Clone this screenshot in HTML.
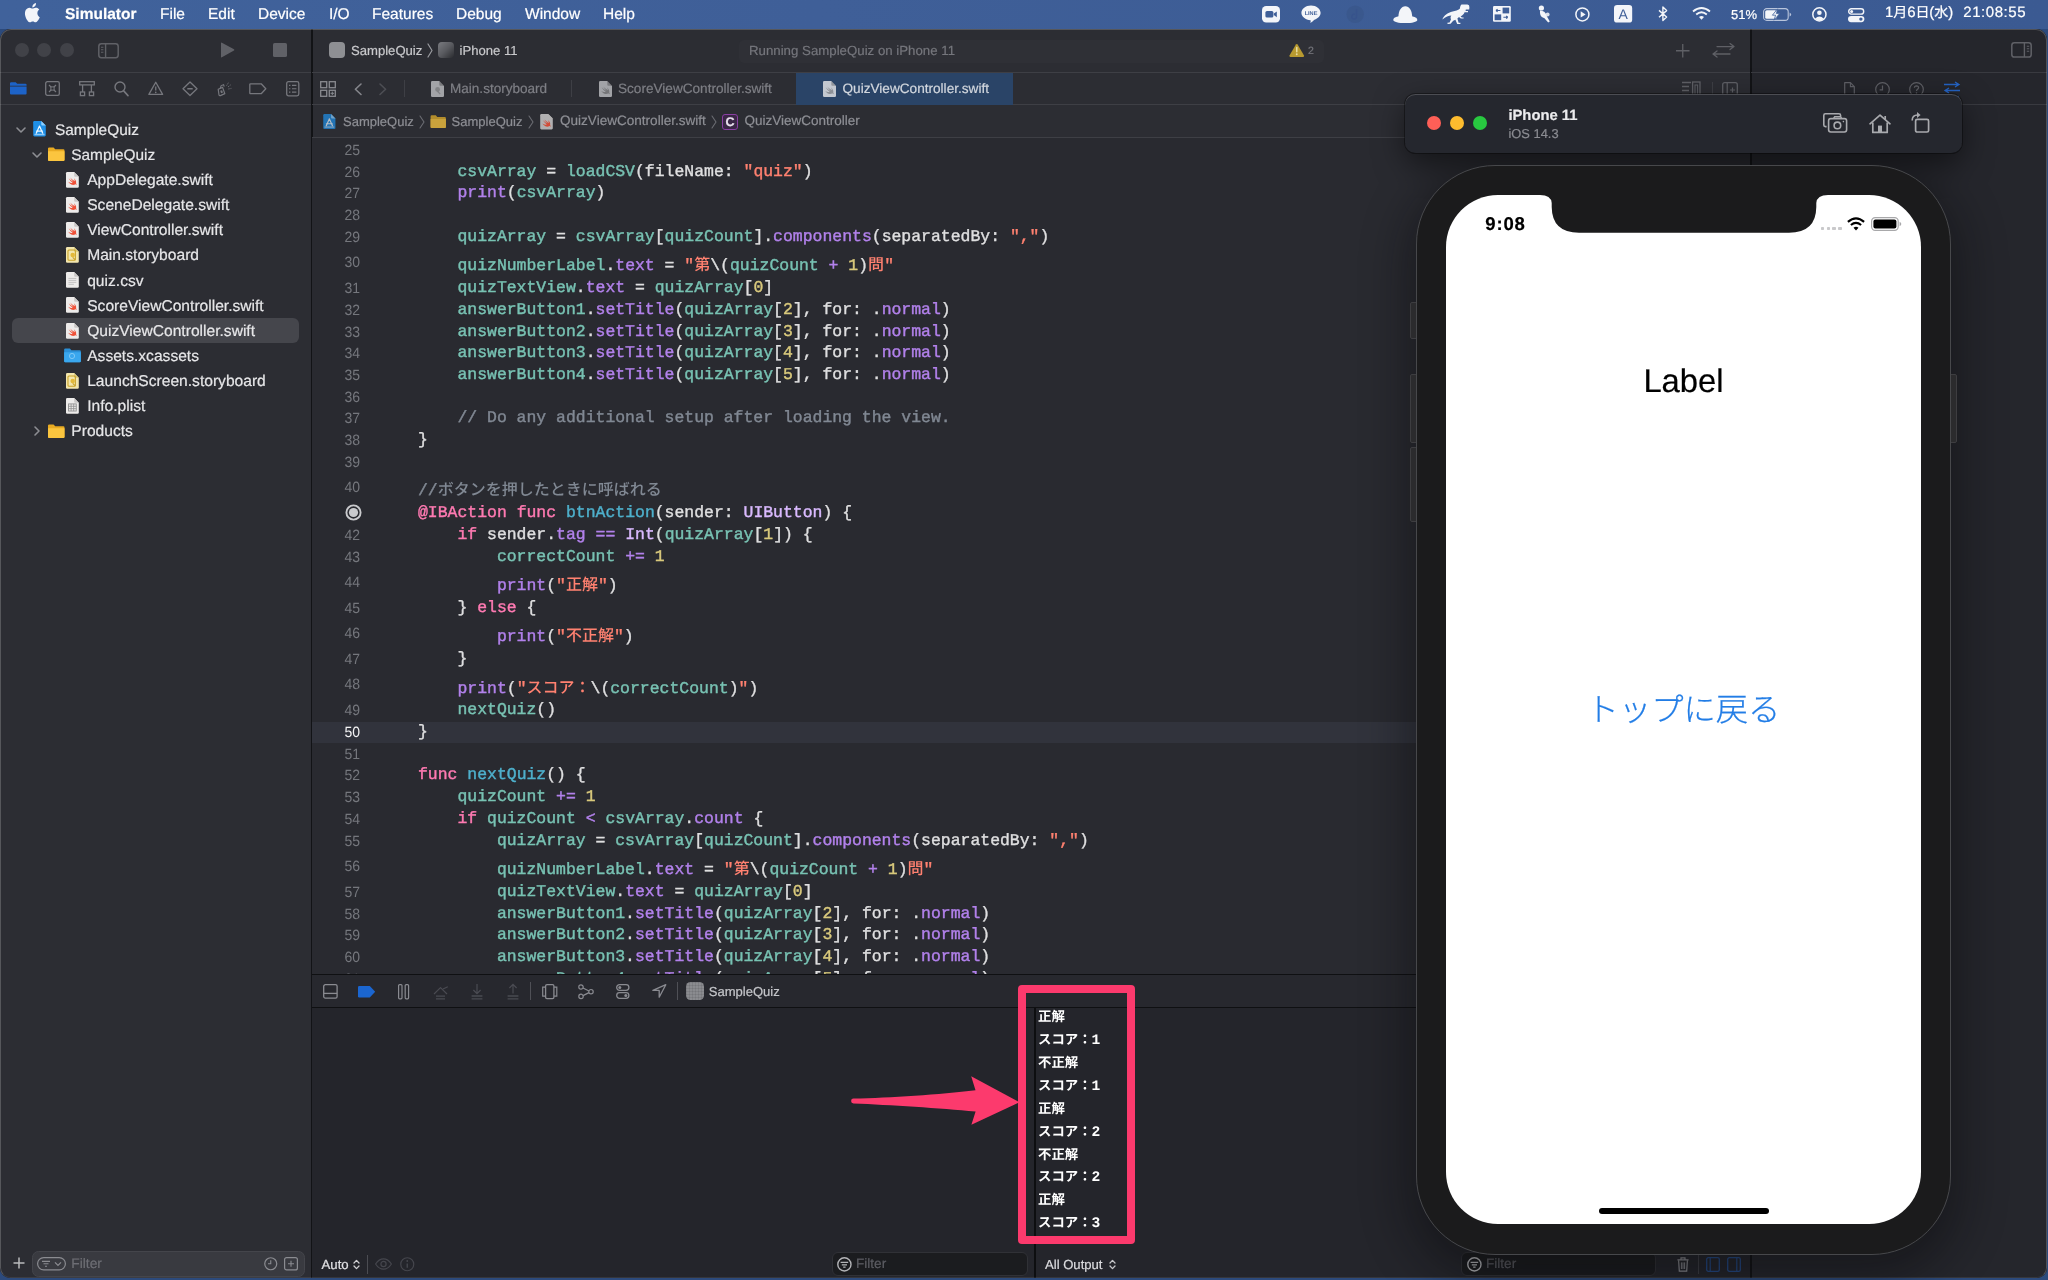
<!DOCTYPE html>
<html lang="ja"><head><meta charset="utf-8"><title>Xcode – SampleQuiz</title>
<style>
*{box-sizing:border-box;margin:0;padding:0}
html,body{width:2048px;height:1280px;overflow:hidden}
body{position:relative;text-rendering:geometricPrecision;background:#2c4a7c;font-family:"Liberation Sans","Noto Sans CJK JP",sans-serif;color:#dfdfe0;-webkit-font-smoothing:antialiased}
.abs{position:absolute}
.t{position:absolute;white-space:pre;line-height:1;-webkit-text-stroke:.2px}
svg{position:absolute;overflow:visible}
#menubar{left:0;top:0;width:2048px;height:29px;background:linear-gradient(90deg,#40629b 0%,#3f5f98 40%,#3b5a92 100%)}
#menubar .t{color:#fff;font-size:15.5px;top:6.5px}
#xwin{will-change:transform;left:0;top:29px;width:2047px;height:1249px;background:#292a30;border-radius:11px 11px 10px 10px;overflow:hidden;}
.hl{position:absolute;background:#1a1b1f}
.mono{font-family:"Liberation Mono","Noto Sans CJK JP",monospace}
.cl{-webkit-text-stroke:.4px;position:absolute;left:378.5px;white-space:pre;font-family:"Liberation Mono","Noto Sans CJK JP",monospace;font-size:16.46px;line-height:22px;height:22px;color:#dfdfe0;letter-spacing:0}
.cl .j{font-family:"Liberation Sans","Noto Sans CJK JP",sans-serif;font-size:16px;letter-spacing:0;line-height:0;font-weight:500;-webkit-text-stroke:0}
.ln{position:absolute;left:6px;width:43px;text-align:right;font-family:"Liberation Sans",sans-serif;font-size:14.9px;line-height:22px;height:22px;color:#75777d;letter-spacing:-0.1px;transform:scaleX(.94);transform-origin:100% 50%}
.k{color:#ff7ab2}.s{color:#ff8170}.n{color:#d9c97c}.p{color:#78c2b3}.d{color:#4eb0cc}.o{color:#b281eb}.y{color:#dabaff}.c{color:#808893}
.row{position:absolute;left:0;white-space:pre;font-size:15.6px;line-height:20px;height:20px;color:#e3e3e5}
.con{position:absolute;left:1038px;white-space:pre;font-family:"Liberation Mono","Noto Sans CJK JP",monospace;font-weight:bold;font-size:13.6px;line-height:20px;height:20px;color:#fff}
.con .j{font-family:"Liberation Sans","Noto Sans CJK JP",sans-serif;font-size:13.4px;font-weight:bold;line-height:0}
</style></head>
<body>
<div id="root" style="position:absolute;left:0;top:0;width:2048px;height:1280px;will-change:transform">
<div id="menubar" class="abs">
<svg preserveAspectRatio="none" style="left:25.0px;top:2.7px;" width="14.8" height="19.2" viewBox="3.9 2 16.2 20"><path d="M18.71 19.5c-.83 1.24-1.71 2.45-3.05 2.47-1.34.03-1.77-.79-3.29-.79-1.53 0-2 .77-3.27.82-1.31.05-2.3-1.32-3.14-2.53C4.25 17 2.94 12.45 4.7 9.39c.87-1.52 2.43-2.48 4.12-2.51 1.28-.02 2.5.87 3.29.87.78 0 2.26-1.07 3.81-.91.65.03 2.47.26 3.64 1.98-.09.06-2.17 1.28-2.15 3.81.03 3.02 2.65 4.03 2.68 4.04-.03.07-.42 1.44-1.38 2.83M13 3.5c.73-.83 1.94-1.46 2.94-1.5.13 1.17-.34 2.35-1.04 3.19-.69.85-1.83 1.51-2.95 1.42-.15-1.15.41-2.35 1.05-3.11z" fill="#f3f5f9"/></svg>
<svg style="left:1261.7px;top:5.5px;" width="18" height="16.6" viewBox="0 0 18 16.6"><rect x="0" y="0" width="18" height="16.6" rx="4.2" fill="#f3f5f9"/><rect x="3.4" y="5" width="8" height="6.6" rx="1.6" fill="#3f5f98"/><path d="M11.8 7.6L14.8 5.4V11.2L11.8 9Z" fill="#3f5f98"/></svg>
<svg style="left:1301.0px;top:4.9px;" width="20" height="18.4" viewBox="0 0 20 18.4"><path d="M10 .4C15.300 .4 19.600 3.700 19.600 7.800C19.600 11 17 13.600 13.400 14.700C12.400 15.800 10.800 17.200 9.300 17.900C9.700 16.900 9.800 15.900 9.600 15.200C4.500 15 .4 11.800 .4 7.800C.4 3.700 4.700 .4 10 .4Z" fill="#f3f5f9"/><text x="10" y="10" font-family="Liberation Sans,sans-serif" font-weight="bold" font-size="5.6" text-anchor="middle" fill="#3f5f98">LINE</text></svg>
<svg style="left:1345.7px;top:4.8px;opacity:.8" width="18.4" height="18.4" viewBox="0 0 18.4 18.4"><circle cx="9.2" cy="9.2" r="8.8" fill="#3a578c"/><path d="M10.5 4.5V11.500A2.400 2.400 0 1 1 8.800 9.400" fill="none" stroke="#36518a" stroke-width="1.4"/></svg>
<svg style="left:1393.0px;top:5.5px;" width="24.6" height="17" viewBox="0 0 24.6 17"><path d="M5.400 11.500C5.400 4.500 8.300 .3 12.300 .3C16.300 .3 19.200 4.500 19.200 11.500Z" fill="#f3f5f9"/><path d="M.3 13.900C.3 11.800 3.400 10.600 5.800 10.300H18.800C21.200 10.600 24.300 11.800 24.300 13.900C24.300 15.900 19 17 12.300 17C5.600 17 .3 15.900 .3 13.900Z" fill="#f3f5f9"/></svg>
<svg style="left:1442.0px;top:3.5px;" width="28" height="20" viewBox="0 0 28 20"><path d="M19.500 .6H25.400Q27.600 .8 27.400 3.200L27.200 5.400H23.800L23.600 7H26V8.200H22.600C21.800 10.400 20.200 11.600 18.600 12.200L19.800 13.400H21.600V14.600H18.800L17 13L15.400 14.400L16.600 18.800H18.400V20H15.200L13.400 15.800L11.200 16.800L8.600 19.800L5.600 20L5.400 18.800L7.600 18.400L9 15.200C8.200 13.800 8.600 12.400 9.400 11.400C6.800 11.600 3.600 12.800 .4 15.400C1.800 12 5.600 8.600 10.600 7.600C13.400 7 16 6.600 17.800 4.800C18.200 3 18.400 1.400 19.500 .6Z" fill="#f3f5f9"/></svg>
<svg style="left:1493.0px;top:5.9px;" width="17.8" height="15.8" viewBox="0 0 17.8 15.8"><rect x="0" y="0" width="17.800" height="15.800" rx="1.200" fill="#f3f5f9"/><rect x="1.600" y="8.400" width="6.600" height="5.800" fill="#3f5f98"/><rect x="9.600" y="1.600" width="6.600" height="5.800" fill="#3f5f98"/><path d="M3 4.500H7.400M3 4.500L4.600 3.200M3 4.500L4.600 5.800" stroke="#3f5f98" stroke-width="1.100" fill="none"/><path d="M10.400 11.300H14.800M14.800 11.300L13.200 10M14.800 11.300L13.200 12.600" stroke="#3f5f98" stroke-width="1.100" fill="none"/></svg>
<svg style="left:1536.5px;top:5.0px;" width="14" height="18" viewBox="0 0 14 18"><circle cx="4.400" cy="3" r="2.600" fill="#f3f5f9"/><path d="M3 5.600C6.400 5.800 8.800 7.400 9.400 10.400L12.800 16.400L11.200 17.600L7.200 13C4.600 12.800 2.600 10.600 3 5.600Z" fill="#f3f5f9"/><circle cx="10.600" cy="9.600" r="2" fill="#f3f5f9" opacity=".85"/></svg>
<svg style="left:1575.0px;top:7.3px;" width="14.8" height="14.8" viewBox="0 0 14.8 14.8"><circle cx="7.400" cy="7.400" r="6.500" fill="none" stroke="#f3f5f9" stroke-width="1.500"/><path d="M5.700 4.300L10.600 7.400L5.700 10.500Z" fill="#f3f5f9"/></svg>
<svg style="left:1613.7px;top:4.9px;" width="18.2" height="17.6" viewBox="0 0 18.2 17.6"><rect x="0" y="0" width="18.200" height="17.600" rx="3.200" fill="#f3f5f9"/><text x="9.100" y="13.900" font-family="Liberation Sans,sans-serif" font-size="14" text-anchor="middle" fill="#3f5f98">A</text></svg>
<svg style="left:1657.5px;top:5.8px;" width="10" height="15.6" viewBox="0 0 10 15.6"><path d="M1 4.400L8.600 11L4.900 14.600V1L8.600 4.600L1 11.200" fill="none" stroke="#f3f5f9" stroke-width="1.400" stroke-linejoin="round"/></svg>
<svg style="left:1692.0px;top:7.3px;" width="19" height="13" viewBox="0 0 19 13"><path d="M9.500 12.800L7 10.100Q9.500 8.100 12 10.100Z" fill="#f3f5f9"/><path d="M4.200 7.500Q9.500 3 14.800 7.500" fill="none" stroke="#f3f5f9" stroke-width="1.900"/><path d="M1 4.400Q9.500 -2.600 18 4.400" fill="none" stroke="#f3f5f9" stroke-width="1.900"/></svg>
<svg style="left:1762.5px;top:7.5px;" width="28.5" height="13" viewBox="0 0 28.5 13"><rect x=".6" y=".6" width="24.600" height="11.800" rx="3.200" fill="none" stroke="#b9c5dc" stroke-width="1.100"/><rect x="2.200" y="2.200" width="11.400" height="8.600" rx="1.600" fill="#f3f5f9"/><path d="M26.600 4.400Q28.100 5.100 28.100 6.500Q28.100 7.900 26.600 8.600Z" fill="#b9c5dc"/><path d="M14.600 .8L9.400 7.200H12.600L11 12.200L16.600 5.600H13.300Z" fill="#f3f5f9" stroke="#3f5f98" stroke-width=".8"/></svg>
<svg style="left:1812.3px;top:7.0px;" width="14.8" height="14.8" viewBox="0 0 14.8 14.8"><circle cx="7.400" cy="7.400" r="6.600" fill="none" stroke="#f3f5f9" stroke-width="1.500"/><circle cx="7.400" cy="5.800" r="2.300" fill="#f3f5f9"/><path d="M3 11.800Q7.400 7.400 11.800 11.800Q7.400 15.600 3 11.800Z" fill="#f3f5f9"/></svg>
<svg style="left:1847.8px;top:7.5px;" width="16.4" height="14.2" viewBox="0 0 16.4 14.2"><rect x=".7" y=".7" width="15" height="5.400" rx="2.700" fill="none" stroke="#f3f5f9" stroke-width="1.400"/><circle cx="3.600" cy="3.400" r="1.500" fill="#f3f5f9"/><rect x="0" y="8" width="16.400" height="6.200" rx="3.100" fill="#f3f5f9"/><circle cx="12.900" cy="11.100" r="1.700" fill="#3f5f98"/></svg>
<div class="t" style="left:65px;font-weight:bold;">Simulator</div>
<div class="t" style="left:160px;">File</div>
<div class="t" style="left:208px;">Edit</div>
<div class="t" style="left:258px;">Device</div>
<div class="t" style="left:329px;">I/O</div>
<div class="t" style="left:372px;">Features</div>
<div class="t" style="left:456px;">Debug</div>
<div class="t" style="left:525px;">Window</div>
<div class="t" style="left:603px;">Help</div>
<div class="t" style="left:1731px;font-size:13px;top:8px">51%</div>
<div class="t" style="left:1885px;font-size:15px;top:5.3px;letter-spacing:-.1px">1<span style="font-size:14px">月</span>6<span style="font-size:14px">日</span>(<span style="font-size:14px">水</span>)</div>
<div class="t" style="left:1963.3px;font-size:15px;top:5.3px;letter-spacing:.55px">21:08:55</div>
</div>
<div id="xwin" class="abs">
<div class="abs" style="left:0;top:0;width:311px;height:1249px;background:#2c2d33"></div>
<div class="abs" style="left:312px;top:0;width:1438px;height:109px;background:#2c2d33"></div>
<div class="abs" style="left:1751px;top:0;width:296px;height:1249px;background:#25262c"></div>
<div class="hl" style="left:311px;top:0;width:1.5px;height:1249px;background:#121316"></div>
<div class="hl" style="left:1750px;top:0;width:1.5px;height:1249px;background:#121316"></div>
<div class="hl" style="left:0;top:43px;width:311px;height:1px;background:#3e3f45"></div>
<div class="hl" style="left:0;top:75px;width:311px;height:1px;background:#3e3f45"></div>
<div class="hl" style="left:312px;top:43px;width:1438px;height:1px;background:#3e3f45"></div>
<div class="hl" style="left:312px;top:75px;width:1438px;height:1px;background:#3e3f45"></div>
<div class="hl" style="left:312px;top:108px;width:1438px;height:1px;background:#3e3f45"></div>
<div class="hl" style="left:1751px;top:43px;width:296px;height:1px;background:#393a40"></div>
<div class="hl" style="left:1751px;top:75px;width:296px;height:1px;background:#393a40"></div>
<div class="abs" style="left:14.5px;top:14.0px;width:14px;height:14px;border-radius:7px;background:#414248"></div>
<div class="abs" style="left:37.4px;top:14.0px;width:14px;height:14px;border-radius:7px;background:#414248"></div>
<div class="abs" style="left:60.2px;top:14.0px;width:14px;height:14px;border-radius:7px;background:#414248"></div>
<svg style="left:98.0px;top:13.5px" width="21" height="15.5" viewBox="0 0 21 15.5" ><rect x=".8" y=".8" width="19.4" height="13.9" rx="2.6" fill="none" stroke="#606167" stroke-width="1.5"/><path d="M7.6 1V14.5" stroke="#606167" stroke-width="1.4"/><path d="M3 4.3H5.4M3 6.8H5.4M3 9.3H5.4" stroke="#606167" stroke-width="1.1"/></svg>
<svg style="left:219.5px;top:13.0px" width="15" height="16" viewBox="0 0 15 16" ><path d="M1 1.2Q1 .2 1.9 .7L14 7.3Q14.8 8 14 8.6L1.9 15.3Q1 15.8 1 14.8Z" fill="#606167"/></svg>
<svg style="left:273.0px;top:14.2px" width="14" height="14" viewBox="0 0 14 14" ><rect x="0" y="0" width="14" height="14" rx="1.6" fill="#606167"/></svg>
<svg style="left:10.2px;top:53.4px" width="16.6" height="12.8" viewBox="0 0 16.8 14" preserveAspectRatio="none"><path d="M0 1.4Q0 .2 1.2 .2H5.8L7.3 1.9H15.6Q16.8 1.9 16.8 3.1V4H0Z" fill="#1d63c8"/><path d="M0 5H16.8V12.6Q16.8 13.8 15.6 13.8H1.2Q0 13.8 0 12.6Z" fill="#1d63c8"/></svg>
<svg style="left:45.0px;top:52.2px" width="15" height="15" viewBox="0 0 15 15" ><rect x=".7" y=".7" width="13.6" height="13.6" rx="1.6" fill="none" stroke="#76777d" stroke-width="1.3"/><path d="M4 4L11 11M11 4L4 11" stroke="#76777d" stroke-width="1.2"/><rect x="5.9" y="5.9" width="3.2" height="3.2" fill="#2b2c31" stroke="#76777d" stroke-width="1"/></svg>
<svg style="left:79.0px;top:52.2px" width="16" height="15.5" viewBox="0 0 16 15.5" ><rect x=".7" y=".7" width="14.6" height="3.2" fill="none" stroke="#76777d" stroke-width="1.3"/><path d="M3.6 4V11M12.4 4V11" stroke="#76777d" stroke-width="1.3"/><rect x="1.4" y="11" width="4.2" height="3.6" fill="none" stroke="#76777d" stroke-width="1.3"/><rect x="10.4" y="11" width="4.2" height="3.6" fill="none" stroke="#76777d" stroke-width="1.3"/></svg>
<svg style="left:113.5px;top:52.0px" width="15" height="16" viewBox="0 0 15 16" ><circle cx="6" cy="6" r="5" fill="none" stroke="#76777d" stroke-width="1.4"/><path d="M9.7 9.9L14 14.6" stroke="#76777d" stroke-width="1.6" stroke-linecap="round"/></svg>
<svg style="left:148.0px;top:52.2px" width="15.5" height="14.5" viewBox="0 0 15.5 14.5" ><path d="M7.75 1.2L14.6 13.4H.9Z" fill="none" stroke="#76777d" stroke-width="1.3" stroke-linejoin="round"/><path d="M7.75 5.4V9.4" stroke="#76777d" stroke-width="1.3"/><circle cx="7.75" cy="11.4" r=".8" fill="#76777d"/></svg>
<svg style="left:182.0px;top:52.0px" width="16" height="15.5" viewBox="0 0 16 15.5" ><path d="M8 1L15 7.75L8 14.5L1 7.75Z" fill="none" stroke="#76777d" stroke-width="1.3" stroke-linejoin="round"/><path d="M5.3 7.75H10.7" stroke="#76777d" stroke-width="1.3"/></svg>
<svg style="left:215.5px;top:51.5px" width="18" height="16" viewBox="0 0 18 16" ><path d="M2.2 8.2L6.6 6.4L8.8 12.6L4.4 14.6Q3.4 15 3 14Z" fill="none" stroke="#76777d" stroke-width="1.2" stroke-linejoin="round"/><path d="M4.2 7.2L5.2 4.6L7.6 3.8L8.2 5.6" fill="none" stroke="#76777d" stroke-width="1.1"/><rect x="4.6" y="9.4" width="2" height="2.6" fill="#76777d" transform="rotate(-20 5.6 10.7)"/><path d="M10.6 4.6L12.6 1.4M12 6L15 3.6M12.4 8L15.4 7.4" stroke="#76777d" stroke-width=".9" stroke-dasharray="1.2 1"/></svg>
<svg style="left:249.0px;top:54.0px" width="18" height="11.5" viewBox="0 0 18 11.5" ><path d="M1.6 .8H12.2L16.8 5.75L12.2 10.7H1.6Q.8 10.7 .8 9.9V1.6Q.8 .8 1.6 .8Z" fill="none" stroke="#76777d" stroke-width="1.3" stroke-linejoin="round"/></svg>
<svg style="left:286.0px;top:52.0px" width="13.5" height="15.5" viewBox="0 0 13.5 15.5" ><rect x=".7" y=".7" width="12.1" height="14.1" rx="1.8" fill="none" stroke="#76777d" stroke-width="1.3"/><path d="M6 4.4H10.4M6 7.75H10.4M6 11.1H10.4" stroke="#76777d" stroke-width="1.2"/><path d="M3 4.4H4.4M3 7.75H4.4M3 11.1H4.4" stroke="#76777d" stroke-width="1.2"/></svg>
<div class="abs" style="left:12px;top:288.5px;width:287px;height:25px;border-radius:6px;background:#45464c"></div>
<svg style="left:15.8px;top:97.5px" width="10" height="6" viewBox="0 0 10 6" ><path d="M1 1L5 5L9 1" fill="none" stroke="#8d8e93" stroke-width="1.6" stroke-linecap="round" stroke-linejoin="round"/></svg>
<svg style="left:33.4px;top:92.0px" width="13" height="15.5" viewBox="0 0 13 16"><path d="M1.2 0H8.3L13 4.7V14.8Q13 16 11.8 16H1.2Q0 16 0 14.8V1.2Q0 0 1.2 0Z" fill="#1f8fe6"/><path d="M8.3 0L13 4.7H9.3Q8.3 4.7 8.3 3.7Z" fill="#8fd0ff"/><path d="M6.5 5.2L3.2 12.6M6.5 5.2L9.8 12.6M3.4 10.4H9.6" stroke="#eaf6ff" stroke-width="1.3" fill="none" stroke-linecap="round"/><rect x="1.3" y="13.2" width="10.4" height="1.5" fill="#bfe3ff" opacity=".7"/></svg>
<div class="t" style="left:55.0px;top:91.6px;font-size:15.40px;line-height:20px;height:20px;color:#e6e6e8;">SampleQuiz</div>
<svg style="left:31.6px;top:122.7px" width="10" height="6" viewBox="0 0 10 6" ><path d="M1 1L5 5L9 1" fill="none" stroke="#8d8e93" stroke-width="1.6" stroke-linecap="round" stroke-linejoin="round"/></svg>
<svg style="left:48.0px;top:118.3px" width="16.5" height="14" viewBox="0 0 16.5 14"><path d="M0 1.6Q0 .4 1.2 .4H5.6L7.2 2.2H15.3Q16.5 2.2 16.5 3.4V12.8Q16.5 14 15.3 14H1.2Q0 14 0 12.8Z" fill="#e9ab22"/><path d="M0 4.2H16.5V12.8Q16.5 14 15.3 14H1.2Q0 14 0 12.8Z" fill="#fbc53f"/></svg>
<div class="t" style="left:71.3px;top:116.8px;font-size:15.40px;line-height:20px;height:20px;color:#e6e6e8;">SampleQuiz</div>
<svg style="left:65.6px;top:142.6px;opacity:1" width="12.8" height="15.8" viewBox="0 0 13 16"><path d="M1.2 0H8.3L13 4.7V14.8Q13 16 11.8 16H1.2Q0 16 0 14.8V1.2Q0 0 1.2 0Z" fill="#edebea"/><path d="M8.3 0L13 4.7H9.3Q8.3 4.7 8.3 3.7Z" fill="#c9c7c6"/><path d="M2.6 6.2C4.6 8 6.2 9.1 7.6 9.9C6.3 8.6 5 7 4.2 5.6C5.9 7.2 7.7 8.6 9 9.3C8.9 8.3 8.6 7.4 8 6.4C9.8 7.8 10.8 9.8 10.2 11.4C10.8 12.1 10.9 12.8 10.8 13.3C10.3 12.5 9.7 12.4 9.2 12.6C8.1 13.2 6.7 13.2 5.4 12.7C4 12.1 3 11.1 2.2 9.9C3.6 10.9 5.3 11.4 6.7 10.8C5 9.5 3.6 7.8 2.6 6.2Z" fill="#f05138"/></svg>
<div class="t" style="left:87.2px;top:141.8px;font-size:15.60px;line-height:20px;height:20px;color:#e6e6e8;">AppDelegate.swift</div>
<svg style="left:65.6px;top:167.7px;opacity:1" width="12.8" height="15.8" viewBox="0 0 13 16"><path d="M1.2 0H8.3L13 4.7V14.8Q13 16 11.8 16H1.2Q0 16 0 14.8V1.2Q0 0 1.2 0Z" fill="#edebea"/><path d="M8.3 0L13 4.7H9.3Q8.3 4.7 8.3 3.7Z" fill="#c9c7c6"/><path d="M2.6 6.2C4.6 8 6.2 9.1 7.6 9.9C6.3 8.6 5 7 4.2 5.6C5.9 7.2 7.7 8.6 9 9.3C8.9 8.3 8.6 7.4 8 6.4C9.8 7.8 10.8 9.8 10.2 11.4C10.8 12.1 10.9 12.8 10.8 13.3C10.3 12.5 9.7 12.4 9.2 12.6C8.1 13.2 6.7 13.2 5.4 12.7C4 12.1 3 11.1 2.2 9.9C3.6 10.9 5.3 11.4 6.7 10.8C5 9.5 3.6 7.8 2.6 6.2Z" fill="#f05138"/></svg>
<div class="t" style="left:87.2px;top:166.9px;font-size:15.60px;line-height:20px;height:20px;color:#e6e6e8;">SceneDelegate.swift</div>
<svg style="left:65.6px;top:192.9px;opacity:1" width="12.8" height="15.8" viewBox="0 0 13 16"><path d="M1.2 0H8.3L13 4.7V14.8Q13 16 11.8 16H1.2Q0 16 0 14.8V1.2Q0 0 1.2 0Z" fill="#edebea"/><path d="M8.3 0L13 4.7H9.3Q8.3 4.7 8.3 3.7Z" fill="#c9c7c6"/><path d="M2.6 6.2C4.6 8 6.2 9.1 7.6 9.9C6.3 8.6 5 7 4.2 5.6C5.9 7.2 7.7 8.6 9 9.3C8.9 8.3 8.6 7.4 8 6.4C9.8 7.8 10.8 9.8 10.2 11.4C10.8 12.1 10.9 12.8 10.8 13.3C10.3 12.5 9.7 12.4 9.2 12.6C8.1 13.2 6.7 13.2 5.4 12.7C4 12.1 3 11.1 2.2 9.9C3.6 10.9 5.3 11.4 6.7 10.8C5 9.5 3.6 7.8 2.6 6.2Z" fill="#f05138"/></svg>
<div class="t" style="left:87.2px;top:192.1px;font-size:15.60px;line-height:20px;height:20px;color:#e6e6e8;">ViewController.swift</div>
<svg style="left:65.6px;top:218.1px;opacity:1" width="12.8" height="15.8" viewBox="0 0 13 16"><path d="M1.2 0H8.3L13 4.7V14.8Q13 16 11.8 16H1.2Q0 16 0 14.8V1.2Q0 0 1.2 0Z" fill="#f3e6ae"/><path d="M8.3 0L13 4.7H9.3Q8.3 4.7 8.3 3.7Z" fill="#d9c77a"/><rect x="2" y="3" width="7.5" height="10.5" rx="1" fill="none" stroke="#c9a227" stroke-width="1.1"/><circle cx="6.8" cy="8.2" r="2.3" fill="#e3b93a"/><path d="M6.8 10.5L9.5 13" stroke="#c9a227" stroke-width="1.2"/></svg>
<div class="t" style="left:87.2px;top:217.3px;font-size:15.60px;line-height:20px;height:20px;color:#e6e6e8;">Main.storyboard</div>
<svg style="left:65.6px;top:243.3px;opacity:1" width="12.8" height="15.8" viewBox="0 0 13 16"><path d="M1.2 0H8.3L13 4.7V14.8Q13 16 11.8 16H1.2Q0 16 0 14.8V1.2Q0 0 1.2 0Z" fill="#edebea"/><path d="M8.3 0L13 4.7H9.3Q8.3 4.7 8.3 3.7Z" fill="#c9c7c6"/><path d="M2.5 6.5H10.5M2.5 8.5H10.5M2.5 10.5H10.5M2.5 12.5H8" stroke="#bdbcbc" stroke-width="0.9"/></svg>
<div class="t" style="left:87.2px;top:242.5px;font-size:15.60px;line-height:20px;height:20px;color:#e6e6e8;">quiz.csv</div>
<svg style="left:65.6px;top:268.4px;opacity:1" width="12.8" height="15.8" viewBox="0 0 13 16"><path d="M1.2 0H8.3L13 4.7V14.8Q13 16 11.8 16H1.2Q0 16 0 14.8V1.2Q0 0 1.2 0Z" fill="#edebea"/><path d="M8.3 0L13 4.7H9.3Q8.3 4.7 8.3 3.7Z" fill="#c9c7c6"/><path d="M2.6 6.2C4.6 8 6.2 9.1 7.6 9.9C6.3 8.6 5 7 4.2 5.6C5.9 7.2 7.7 8.6 9 9.3C8.9 8.3 8.6 7.4 8 6.4C9.8 7.8 10.8 9.8 10.2 11.4C10.8 12.1 10.9 12.8 10.8 13.3C10.3 12.5 9.7 12.4 9.2 12.6C8.1 13.2 6.7 13.2 5.4 12.7C4 12.1 3 11.1 2.2 9.9C3.6 10.9 5.3 11.4 6.7 10.8C5 9.5 3.6 7.8 2.6 6.2Z" fill="#f05138"/></svg>
<div class="t" style="left:87.2px;top:267.6px;font-size:15.60px;line-height:20px;height:20px;color:#e6e6e8;">ScoreViewController.swift</div>
<svg style="left:65.6px;top:293.5px;opacity:1" width="12.8" height="15.8" viewBox="0 0 13 16"><path d="M1.2 0H8.3L13 4.7V14.8Q13 16 11.8 16H1.2Q0 16 0 14.8V1.2Q0 0 1.2 0Z" fill="#edebea"/><path d="M8.3 0L13 4.7H9.3Q8.3 4.7 8.3 3.7Z" fill="#c9c7c6"/><path d="M2.6 6.2C4.6 8 6.2 9.1 7.6 9.9C6.3 8.6 5 7 4.2 5.6C5.9 7.2 7.7 8.6 9 9.3C8.9 8.3 8.6 7.4 8 6.4C9.8 7.8 10.8 9.8 10.2 11.4C10.8 12.1 10.9 12.8 10.8 13.3C10.3 12.5 9.7 12.4 9.2 12.6C8.1 13.2 6.7 13.2 5.4 12.7C4 12.1 3 11.1 2.2 9.9C3.6 10.9 5.3 11.4 6.7 10.8C5 9.5 3.6 7.8 2.6 6.2Z" fill="#f05138"/></svg>
<div class="t" style="left:87.2px;top:292.7px;font-size:15.60px;line-height:20px;height:20px;color:#e6e6e8;">QuizViewController.swift</div>
<svg style="left:63.5px;top:319.4px" width="17" height="14.2" viewBox="0 0 16.5 14"><path d="M0 1.6Q0 .4 1.2 .4H5.6L7.2 2.2H15.3Q16.5 2.2 16.5 3.4V12.8Q16.5 14 15.3 14H1.2Q0 14 0 12.8Z" fill="#2b8fd6"/><path d="M0 4.2H16.5V12.8Q16.5 14 15.3 14H1.2Q0 14 0 12.8Z" fill="#3aa7ee"/></svg>
<svg style="left:68.0px;top:323.2px" width="8" height="8" viewBox="0 0 8 8" ><circle cx="4" cy="4" r="2.6" fill="none" stroke="#7fc8f5" stroke-width="1"/></svg>
<div class="t" style="left:87.2px;top:317.9px;font-size:15.60px;line-height:20px;height:20px;color:#e6e6e8;">Assets.xcassets</div>
<svg style="left:65.6px;top:343.8px;opacity:1" width="12.8" height="15.8" viewBox="0 0 13 16"><path d="M1.2 0H8.3L13 4.7V14.8Q13 16 11.8 16H1.2Q0 16 0 14.8V1.2Q0 0 1.2 0Z" fill="#f3e6ae"/><path d="M8.3 0L13 4.7H9.3Q8.3 4.7 8.3 3.7Z" fill="#d9c77a"/><rect x="2" y="3" width="7.5" height="10.5" rx="1" fill="none" stroke="#c9a227" stroke-width="1.1"/><circle cx="6.8" cy="8.2" r="2.3" fill="#e3b93a"/><path d="M6.8 10.5L9.5 13" stroke="#c9a227" stroke-width="1.2"/></svg>
<div class="t" style="left:87.2px;top:343.0px;font-size:15.60px;line-height:20px;height:20px;color:#e6e6e8;">LaunchScreen.storyboard</div>
<svg style="left:65.6px;top:369.0px;opacity:1" width="12.8" height="15.8" viewBox="0 0 13 16"><path d="M1.2 0H8.3L13 4.7V14.8Q13 16 11.8 16H1.2Q0 16 0 14.8V1.2Q0 0 1.2 0Z" fill="#edebea"/><path d="M8.3 0L13 4.7H9.3Q8.3 4.7 8.3 3.7Z" fill="#c9c7c6"/><rect x="2.6" y="6" width="7.8" height="7.2" fill="none" stroke="#8d8d8d" stroke-width="0.9"/><path d="M2.6 8.4H10.4M2.6 10.8H10.4M5.2 6V13.2M7.8 6V13.2" stroke="#8d8d8d" stroke-width="0.8"/></svg>
<div class="t" style="left:87.2px;top:368.2px;font-size:15.60px;line-height:20px;height:20px;color:#e6e6e8;">Info.plist</div>
<svg style="left:34.2px;top:397.0px" width="6" height="10" viewBox="0 0 6 10" ><path d="M1 1L5 5L1 9" fill="none" stroke="#8d8e93" stroke-width="1.6" stroke-linecap="round" stroke-linejoin="round"/></svg>
<svg style="left:48.0px;top:395.0px" width="16.5" height="14" viewBox="0 0 16.5 14"><path d="M0 1.6Q0 .4 1.2 .4H5.6L7.2 2.2H15.3Q16.5 2.2 16.5 3.4V12.8Q16.5 14 15.3 14H1.2Q0 14 0 12.8Z" fill="#e9ab22"/><path d="M0 4.2H16.5V12.8Q16.5 14 15.3 14H1.2Q0 14 0 12.8Z" fill="#fbc53f"/></svg>
<div class="t" style="left:71.3px;top:393.3px;font-size:15.60px;line-height:20px;height:20px;color:#e6e6e8;">Products</div>
<svg style="left:13.0px;top:1228.0px" width="12" height="12" viewBox="0 0 12 12" ><path d="M6 .5V11.5M.5 6H11.5" stroke="#b9babd" stroke-width="1.5"/></svg>
<div class="abs" style="left:32.2px;top:1222.3px;width:272.5px;height:25.7px;border-radius:6.5px;background:#393a40;border:1px solid #44454b"></div>
<svg style="left:37.0px;top:1228.0px" width="29" height="13.5" viewBox="0 0 29 13.5" ><rect x=".6" y=".6" width="27.8" height="12.3" rx="6.1" fill="none" stroke="#8b8c91" stroke-width="1.2"/><path d="M5 4.4H13M6.5 6.8H11.5M8 9.2H10" stroke="#8b8c91" stroke-width="1.1"/><path d="M18 5.4L21 8.4L24 5.4" fill="none" stroke="#8b8c91" stroke-width="1.3"/></svg>
<div class="t" style="left:71.3px;top:1226.3px;font-size:13.80px;line-height:18px;height:18px;color:#6d6e74;">Filter</div>
<svg style="left:264.0px;top:1228.0px" width="13.5" height="13.5" viewBox="0 0 13.5 13.5" ><circle cx="6.75" cy="6.75" r="6" fill="none" stroke="#8b8c91" stroke-width="1.2"/><path d="M6.75 3.2V6.75H4" fill="none" stroke="#8b8c91" stroke-width="1.1"/></svg>
<svg style="left:284.0px;top:1228.0px" width="14" height="13.5" viewBox="0 0 14 13.5" ><rect x=".6" y=".6" width="12.8" height="12.3" rx="2" fill="none" stroke="#8b8c91" stroke-width="1.2"/><path d="M4 6.75H10M7 3.75V9.75" stroke="#8b8c91" stroke-width="1.1"/></svg>
<div class="abs" style="left:329px;top:13.0px;width:16px;height:16px;border-radius:4px;background:#8e8f93"></div>
<div class="t" style="left:351.0px;top:12.5px;font-size:13.10px;line-height:17px;height:17px;color:#c9c9cc;">SampleQuiz</div>
<svg style="left:426.5px;top:13.5px" width="6" height="15" viewBox="0 0 6 15" ><path d="M1 1L5 7.5L1 14" fill="none" stroke="#9a9ba0" stroke-width="1.2" stroke-linecap="round" stroke-linejoin="round"/></svg>
<div class="abs" style="left:438px;top:13.0px;width:16px;height:16px;border-radius:4px;background:linear-gradient(135deg,#7a7b80 0%,#5a5b60 50%,#2a2b2f 100%)"></div>
<div class="t" style="left:459.5px;top:12.5px;font-size:13.10px;line-height:17px;height:17px;color:#c9c9cc;">iPhone 11</div>
<div class="abs" style="left:739px;top:10.5px;width:585px;height:23px;border-radius:5px;background:#2f3036"></div>
<div class="t" style="left:749.0px;top:13.3px;font-size:13.25px;line-height:17px;height:17px;color:#75767c;">Running SampleQuiz on iPhone 11</div>
<svg style="left:1289.0px;top:13.7px" width="15.5" height="14.5" viewBox="0 0 15.5 14.5" ><path d="M7.75 .9Q8.3 .9 8.6 1.4L15 12.6Q15.4 13.8 14.2 13.9H1.3Q.1 13.8 .5 12.6L6.9 1.4Q7.2 .9 7.75 .9Z" fill="#b89a30"/><path d="M7.75 4.6V8.8" stroke="#e9dca0" stroke-width="1.5" stroke-linecap="round"/><circle cx="7.75" cy="11.2" r=".95" fill="#e9dca0"/></svg>
<div class="t" style="left:1308.0px;top:15.0px;font-size:10.50px;line-height:14px;height:14px;color:#75767c;">2</div>
<svg style="left:1676.0px;top:14.8px" width="13.5" height="13.5" viewBox="0 0 13.5 13.5" ><path d="M6.75 0V13.5M0 6.75H13.5" stroke="#5f6066" stroke-width="1.3"/></svg>
<svg style="left:1712.0px;top:13.5px" width="23" height="15" viewBox="0 0 23 15" ><path d="M5 3.6H22M18 .6L22 3.6L18 6.6" fill="none" stroke="#5f6066" stroke-width="1.3" stroke-linecap="round" stroke-linejoin="round"/><path d="M18 11H1M5 8L1 11L5 14" fill="none" stroke="#5f6066" stroke-width="1.3" stroke-linecap="round" stroke-linejoin="round"/></svg>
<svg style="left:2011.4px;top:13.4px" width="21" height="15.8" viewBox="0 0 21 15.8" ><rect x=".8" y=".8" width="19.4" height="14.2" rx="2.6" fill="none" stroke="#606167" stroke-width="1.5"/><path d="M13.4 1V15" stroke="#606167" stroke-width="1.4"/><path d="M15.8 4.3H18.2M15.8 6.8H18.2M15.8 9.3H18.2" stroke="#606167" stroke-width="1.1"/></svg>
<svg style="left:320.0px;top:51.5px" width="16" height="16" viewBox="0 0 16 16" ><rect x=".7" y=".7" width="6" height="6" fill="none" stroke="#898a90" stroke-width="1.3"/><rect x="9.3" y=".7" width="6" height="6" fill="none" stroke="#898a90" stroke-width="1.3"/><rect x=".7" y="9.3" width="6" height="6" fill="none" stroke="#898a90" stroke-width="1.3"/><rect x="9.3" y="9.3" width="6" height="6" fill="none" stroke="#898a90" stroke-width="1.3"/><path d="M12.3 10.6V14M10.6 12.3H14" stroke="#898a90" stroke-width="1"/></svg>
<svg style="left:354.0px;top:53.5px" width="8" height="12.5" viewBox="0 0 8 12.5" ><path d="M7 1L1.4 6.25L7 11.5" fill="none" stroke="#85868c" stroke-width="1.6" stroke-linecap="round" stroke-linejoin="round"/></svg>
<svg style="left:379.0px;top:53.5px" width="8" height="12.5" viewBox="0 0 8 12.5" ><path d="M1 1L6.6 6.25L1 11.5" fill="none" stroke="#4d4e54" stroke-width="1.6" stroke-linecap="round" stroke-linejoin="round"/></svg>
<div class="hl" style="left:403.5px;top:51.0px;width:1px;height:17px;background:#3e3f45"></div>
<div class="hl" style="left:570.5px;top:51.0px;width:1px;height:17px;background:#3e3f45"></div>
<svg style="left:431.0px;top:51.5px;opacity:1" width="13" height="16" viewBox="0 0 13 16"><path d="M1.2 0H8.3L13 4.7V14.8Q13 16 11.8 16H1.2Q0 16 0 14.8V1.2Q0 0 1.2 0Z" fill="#a2a3a7"/><path d="M8.3 0L13 4.7H9.3Q8.3 4.7 8.3 3.7Z" fill="rgba(0,0,0,.25)"/><circle cx="6.6" cy="8.4" r="2.4" fill="rgba(0,0,0,.2)"/><path d="M6.6 10.5L9.2 13" stroke="rgba(0,0,0,.2)" stroke-width="1.2"/></svg>
<div class="t" style="left:450.0px;top:50.6px;font-size:13.55px;line-height:18px;height:18px;color:#7e7f85;">Main.storyboard</div>
<svg style="left:599.0px;top:51.5px;opacity:1" width="13" height="16" viewBox="0 0 13 16"><path d="M1.2 0H8.3L13 4.7V14.8Q13 16 11.8 16H1.2Q0 16 0 14.8V1.2Q0 0 1.2 0Z" fill="#a2a3a7"/><path d="M8.3 0L13 4.7H9.3Q8.3 4.7 8.3 3.7Z" fill="rgba(0,0,0,.25)"/><path d="M2.6 6.2C4.6 8 6.2 9.1 7.6 9.9C6.3 8.6 5 7 4.2 5.6C5.9 7.2 7.7 8.6 9 9.3C8.9 8.3 8.6 7.4 8 6.4C9.8 7.8 10.8 9.8 10.2 11.4C10.8 12.1 10.9 12.8 10.8 13.3C10.3 12.5 9.7 12.4 9.2 12.6C8.1 13.2 6.7 13.2 5.4 12.7C4 12.1 3 11.1 2.2 9.9C3.6 10.9 5.3 11.4 6.7 10.8C5 9.5 3.6 7.8 2.6 6.2Z" fill="rgba(0,0,0,.28)"/></svg>
<div class="t" style="left:618.0px;top:50.6px;font-size:13.60px;line-height:18px;height:18px;color:#7e7f85;">ScoreViewController.swift</div>
<div class="abs" style="left:795.5px;top:44.0px;width:217.5px;height:31.5px;background:#2a4467"></div>
<svg style="left:823.0px;top:51.5px;opacity:1" width="13" height="16" viewBox="0 0 13 16"><path d="M1.2 0H8.3L13 4.7V14.8Q13 16 11.8 16H1.2Q0 16 0 14.8V1.2Q0 0 1.2 0Z" fill="#c3c8d0"/><path d="M8.3 0L13 4.7H9.3Q8.3 4.7 8.3 3.7Z" fill="rgba(0,0,0,.25)"/><path d="M2.6 6.2C4.6 8 6.2 9.1 7.6 9.9C6.3 8.6 5 7 4.2 5.6C5.9 7.2 7.7 8.6 9 9.3C8.9 8.3 8.6 7.4 8 6.4C9.8 7.8 10.8 9.8 10.2 11.4C10.8 12.1 10.9 12.8 10.8 13.3C10.3 12.5 9.7 12.4 9.2 12.6C8.1 13.2 6.7 13.2 5.4 12.7C4 12.1 3 11.1 2.2 9.9C3.6 10.9 5.3 11.4 6.7 10.8C5 9.5 3.6 7.8 2.6 6.2Z" fill="rgba(0,0,0,.28)"/></svg>
<div class="t" style="left:842.5px;top:50.6px;font-size:13.62px;line-height:18px;height:18px;color:#d2d7de;">QuizViewController.swift</div>
<svg style="left:1682.0px;top:52.0px" width="19" height="16" viewBox="0 0 19 16" ><path d="M0 1.5H9M0 5.5H7M0 9.5H7M0 13.5H7" stroke="#5f6066" stroke-width="1.3"/><rect x="10.6" y="1" width="7.4" height="15" fill="none" stroke="#5f6066" stroke-width="1.3"/><rect x="13" y="4" width="2.6" height="12" fill="none" stroke="#5f6066" stroke-width="1"/></svg>
<div class="hl" style="left:1712px;top:53.0px;width:1px;height:14px;background:#3e3f45"></div>
<svg style="left:1722.0px;top:52.5px" width="16" height="16" viewBox="0 0 16 16" ><rect x=".7" y=".7" width="14.6" height="14.6" rx="2" fill="none" stroke="#5f6066" stroke-width="1.3"/><path d="M5.2 1V15" stroke="#5f6066" stroke-width="1.2"/><path d="M8 8H13M10.5 5.5V10.5" stroke="#5f6066" stroke-width="1.2"/></svg>
<svg style="left:1843.5px;top:53.0px" width="11" height="14" viewBox="0 0 11 14" ><path d="M.7 .7H6.4L10.3 4.6V13.3H.7Z" fill="none" stroke="#5f6066" stroke-width="1.2" stroke-linejoin="round"/><path d="M6.4 .7V4.6H10.3" fill="none" stroke="#5f6066" stroke-width="1.1"/></svg>
<svg style="left:1874.5px;top:52.5px" width="15" height="15" viewBox="0 0 15 15" ><circle cx="7.5" cy="7.5" r="6.8" fill="none" stroke="#5f6066" stroke-width="1.2"/><path d="M7.5 3.6V7.8H4.6" fill="none" stroke="#5f6066" stroke-width="1.2"/></svg>
<svg style="left:1909.0px;top:52.5px" width="15" height="15" viewBox="0 0 15 15" ><circle cx="7.5" cy="7.5" r="6.8" fill="none" stroke="#5f6066" stroke-width="1.2"/><path d="M5.4 5.8Q5.5 3.8 7.5 3.8Q9.6 3.9 9.6 5.6Q9.6 6.8 8.3 7.4Q7.5 7.9 7.5 9" fill="none" stroke="#5f6066" stroke-width="1.2"/><circle cx="7.5" cy="11.1" r=".8" fill="#5f6066"/></svg>
<svg style="left:1943.5px;top:52.5px" width="16" height="14" viewBox="0 0 16 14" ><path d="M0 2.5H15M11 0L15 2.5L11 5" fill="none" stroke="#2463c4" stroke-width="1.3"/><path d="M1 8.5H16M5 6L1 8.5L5 11" fill="none" stroke="#2463c4" stroke-width="1.3"/><path d="M0 14.5H15" stroke="#2463c4" stroke-width="1.3"/></svg>
<svg style="opacity:.72;left:322.7px;top:85.0px" width="12.7" height="15" viewBox="0 0 13 16"><path d="M1.2 0H8.3L13 4.7V14.8Q13 16 11.8 16H1.2Q0 16 0 14.8V1.2Q0 0 1.2 0Z" fill="#1f8fe6"/><path d="M8.3 0L13 4.7H9.3Q8.3 4.7 8.3 3.7Z" fill="#8fd0ff"/><path d="M6.5 5.2L3.2 12.6M6.5 5.2L9.8 12.6M3.4 10.4H9.6" stroke="#eaf6ff" stroke-width="1.3" fill="none" stroke-linecap="round"/><rect x="1.3" y="13.2" width="10.4" height="1.5" fill="#bfe3ff" opacity=".7"/></svg>
<div class="t" style="left:343.0px;top:83.9px;font-size:13.00px;line-height:17px;height:17px;color:#8e8f95;">SampleQuiz</div>
<svg style="left:418.5px;top:85.5px" width="6" height="14" viewBox="0 0 6 14" ><path d="M1 1L5 7L1 13" fill="none" stroke="#6c6d73" stroke-width="1.1" stroke-linecap="round" stroke-linejoin="round"/></svg>
<svg style="left:429.5px;top:86.0px" width="16.5" height="13" viewBox="0 0 16.5 14"><path d="M0 1.6Q0 .4 1.2 .4H5.6L7.2 2.2H15.3Q16.5 2.2 16.5 3.4V12.8Q16.5 14 15.3 14H1.2Q0 14 0 12.8Z" fill="#b38d2c"/><path d="M0 4.2H16.5V12.8Q16.5 14 15.3 14H1.2Q0 14 0 12.8Z" fill="#c9a23c"/></svg>
<div class="t" style="left:451.6px;top:83.9px;font-size:13.00px;line-height:17px;height:17px;color:#8e8f95;">SampleQuiz</div>
<svg style="left:527.5px;top:85.5px" width="6" height="14" viewBox="0 0 6 14" ><path d="M1 1L5 7L1 13" fill="none" stroke="#6c6d73" stroke-width="1.1" stroke-linecap="round" stroke-linejoin="round"/></svg>
<svg style="left:539.5px;top:84.8px;opacity:0.85" width="13" height="15.5" viewBox="0 0 13 16"><path d="M1.2 0H8.3L13 4.7V14.8Q13 16 11.8 16H1.2Q0 16 0 14.8V1.2Q0 0 1.2 0Z" fill="#c9c8c8"/><path d="M8.3 0L13 4.7H9.3Q8.3 4.7 8.3 3.7Z" fill="#c9c7c6"/><path d="M2.6 6.2C4.6 8 6.2 9.1 7.6 9.9C6.3 8.6 5 7 4.2 5.6C5.9 7.2 7.7 8.6 9 9.3C8.9 8.3 8.6 7.4 8 6.4C9.8 7.8 10.8 9.8 10.2 11.4C10.8 12.1 10.9 12.8 10.8 13.3C10.3 12.5 9.7 12.4 9.2 12.6C8.1 13.2 6.7 13.2 5.4 12.7C4 12.1 3 11.1 2.2 9.9C3.6 10.9 5.3 11.4 6.7 10.8C5 9.5 3.6 7.8 2.6 6.2Z" fill="#f05138"/></svg>
<div class="t" style="left:560.0px;top:83.4px;font-size:13.55px;line-height:18px;height:18px;color:#8e8f95;">QuizViewController.swift</div>
<svg style="left:711.0px;top:85.5px" width="6" height="14" viewBox="0 0 6 14" ><path d="M1 1L5 7L1 13" fill="none" stroke="#6c6d73" stroke-width="1.1" stroke-linecap="round" stroke-linejoin="round"/></svg>
<div class="abs" style="left:722px;top:84.5px;width:16px;height:16px;border-radius:3px;border:1.4px solid #8a3fa3;background:#3a2646"></div>
<div class="t" style="left:725.6px;top:84.6px;font-size:12.50px;line-height:16px;height:16px;color:#e9e0ee;font-weight:bold">C</div>
<div class="t" style="left:744.5px;top:83.4px;font-size:13.50px;line-height:18px;height:18px;color:#8e8f95;">QuizViewController</div>
<div class="abs" id="editor" style="left:312px;top:109px;width:1438px;height:836px;overflow:hidden;background:#292a30">
<div class="abs" style="left:0;top:583.5px;width:1438px;height:21.4px;background:#31333c"></div>
<div class="ln" style="left:5.4px;top:1.98px;color:#75777d">25</div>
<div class="ln" style="left:5.4px;top:23.70px;color:#75777d">26</div><div class="cl" style="left:66.5px;top:22.70px">        <span class="p">csvArray</span> = <span class="p">loadCSV</span>(fileName: <span class="s">"quiz"</span>)</div>
<div class="ln" style="left:5.4px;top:45.42px;color:#75777d">27</div><div class="cl" style="left:66.5px;top:44.42px">        <span class="o">print</span>(<span class="p">csvArray</span>)</div>
<div class="ln" style="left:5.4px;top:67.14px;color:#75777d">28</div>
<div class="ln" style="left:5.4px;top:88.86px;color:#75777d">29</div><div class="cl" style="left:66.5px;top:87.86px">        <span class="p">quizArray</span> = <span class="p">csvArray</span>[<span class="p">quizCount</span>].<span class="o">components</span>(separatedBy: <span class="s">","</span>)</div>
<div class="ln" style="left:5.4px;top:114.08px;color:#75777d">30</div><div class="cl" style="left:66.5px;top:117.38px">        <span class="p">quizNumberLabel</span>.<span class="o">text</span> = <span class="s">"<span class="j">第</span></span>\(<span class="p">quizCount</span> <span class="o">+</span> <span class="n">1</span>)<span class="s"><span class="j">問</span>"</span></div>
<div class="ln" style="left:5.4px;top:140.10px;color:#75777d">31</div><div class="cl" style="left:66.5px;top:139.10px">        <span class="p">quizTextView</span>.<span class="o">text</span> = <span class="p">quizArray</span>[<span class="n">0</span>]</div>
<div class="ln" style="left:5.4px;top:161.82px;color:#75777d">32</div><div class="cl" style="left:66.5px;top:160.82px">        <span class="p">answerButton1</span>.<span class="o">setTitle</span>(<span class="p">quizArray</span>[<span class="n">2</span>], for: .<span class="o">normal</span>)</div>
<div class="ln" style="left:5.4px;top:183.54px;color:#75777d">33</div><div class="cl" style="left:66.5px;top:182.54px">        <span class="p">answerButton2</span>.<span class="o">setTitle</span>(<span class="p">quizArray</span>[<span class="n">3</span>], for: .<span class="o">normal</span>)</div>
<div class="ln" style="left:5.4px;top:205.26px;color:#75777d">34</div><div class="cl" style="left:66.5px;top:204.26px">        <span class="p">answerButton3</span>.<span class="o">setTitle</span>(<span class="p">quizArray</span>[<span class="n">4</span>], for: .<span class="o">normal</span>)</div>
<div class="ln" style="left:5.4px;top:226.98px;color:#75777d">35</div><div class="cl" style="left:66.5px;top:225.98px">        <span class="p">answerButton4</span>.<span class="o">setTitle</span>(<span class="p">quizArray</span>[<span class="n">5</span>], for: .<span class="o">normal</span>)</div>
<div class="ln" style="left:5.4px;top:248.70px;color:#75777d">36</div>
<div class="ln" style="left:5.4px;top:270.42px;color:#75777d">37</div><div class="cl" style="left:66.5px;top:269.42px">        <span class="c">// Do any additional setup after loading the view.</span></div>
<div class="ln" style="left:5.4px;top:292.14px;color:#75777d">38</div><div class="cl" style="left:66.5px;top:291.14px">    }</div>
<div class="ln" style="left:5.4px;top:313.86px;color:#75777d">39</div>
<div class="ln" style="left:5.4px;top:339.08px;color:#75777d">40</div><div class="cl" style="left:66.5px;top:342.38px">    <span class="c">//<span class="j">ボタンを押したときに呼ばれる</span></span></div>
<div class="cl" style="left:66.5px;top:364.10px">    <span class="k">@IBAction</span> <span class="k">func</span> <span class="d">btnAction</span>(sender: <span class="y">UIButton</span>) {</div>
<div class="ln" style="left:5.4px;top:386.82px;color:#75777d">42</div><div class="cl" style="left:66.5px;top:385.82px">        <span class="k">if</span> sender.<span class="o">tag</span> <span class="o">==</span> <span class="y">Int</span>(<span class="p">quizArray</span>[<span class="n">1</span>]) {</div>
<div class="ln" style="left:5.4px;top:408.54px;color:#75777d">43</div><div class="cl" style="left:66.5px;top:407.54px">            <span class="p">correctCount</span> <span class="o">+=</span> <span class="n">1</span></div>
<div class="ln" style="left:5.4px;top:433.76px;color:#75777d">44</div><div class="cl" style="left:66.5px;top:437.06px">            <span class="o">print</span>(<span class="s">"<span class="j">正解</span>"</span>)</div>
<div class="ln" style="left:5.4px;top:459.78px;color:#75777d">45</div><div class="cl" style="left:66.5px;top:458.78px">        } <span class="k">else</span> {</div>
<div class="ln" style="left:5.4px;top:485.00px;color:#75777d">46</div><div class="cl" style="left:66.5px;top:488.30px">            <span class="o">print</span>(<span class="s">"<span class="j">不正解</span>"</span>)</div>
<div class="ln" style="left:5.4px;top:511.02px;color:#75777d">47</div><div class="cl" style="left:66.5px;top:510.02px">        }</div>
<div class="ln" style="left:5.4px;top:536.24px;color:#75777d">48</div><div class="cl" style="left:66.5px;top:539.54px">        <span class="o">print</span>(<span class="s">"<span class="j">スコア：</span></span>\(<span class="p">correctCount</span>)<span class="s">"</span>)</div>
<div class="ln" style="left:5.4px;top:562.26px;color:#75777d">49</div><div class="cl" style="left:66.5px;top:561.26px">        <span class="p">nextQuiz</span>()</div>
<div class="ln" style="left:5.4px;top:583.98px;color:#f2f2f3">50</div><div class="cl" style="left:66.5px;top:582.98px">    }</div>
<div class="ln" style="left:5.4px;top:605.70px;color:#75777d">51</div>
<div class="ln" style="left:5.4px;top:627.42px;color:#75777d">52</div><div class="cl" style="left:66.5px;top:626.42px">    <span class="k">func</span> <span class="d">nextQuiz</span>() {</div>
<div class="ln" style="left:5.4px;top:649.14px;color:#75777d">53</div><div class="cl" style="left:66.5px;top:648.14px">        <span class="p">quizCount</span> <span class="o">+=</span> <span class="n">1</span></div>
<div class="ln" style="left:5.4px;top:670.86px;color:#75777d">54</div><div class="cl" style="left:66.5px;top:669.86px">        <span class="k">if</span> <span class="p">quizCount</span> <span class="o">&lt;</span> <span class="p">csvArray</span>.<span class="o">count</span> {</div>
<div class="ln" style="left:5.4px;top:692.58px;color:#75777d">55</div><div class="cl" style="left:66.5px;top:691.58px">            <span class="p">quizArray</span> = <span class="p">csvArray</span>[<span class="p">quizCount</span>].<span class="o">components</span>(separatedBy: <span class="s">","</span>)</div>
<div class="ln" style="left:5.4px;top:717.80px;color:#75777d">56</div><div class="cl" style="left:66.5px;top:721.10px">            <span class="p">quizNumberLabel</span>.<span class="o">text</span> = <span class="s">"<span class="j">第</span></span>\(<span class="p">quizCount</span> <span class="o">+</span> <span class="n">1</span>)<span class="s"><span class="j">問</span>"</span></div>
<div class="ln" style="left:5.4px;top:743.82px;color:#75777d">57</div><div class="cl" style="left:66.5px;top:742.82px">            <span class="p">quizTextView</span>.<span class="o">text</span> = <span class="p">quizArray</span>[<span class="n">0</span>]</div>
<div class="ln" style="left:5.4px;top:765.54px;color:#75777d">58</div><div class="cl" style="left:66.5px;top:764.54px">            <span class="p">answerButton1</span>.<span class="o">setTitle</span>(<span class="p">quizArray</span>[<span class="n">2</span>], for: .<span class="o">normal</span>)</div>
<div class="ln" style="left:5.4px;top:787.26px;color:#75777d">59</div><div class="cl" style="left:66.5px;top:786.26px">            <span class="p">answerButton2</span>.<span class="o">setTitle</span>(<span class="p">quizArray</span>[<span class="n">3</span>], for: .<span class="o">normal</span>)</div>
<div class="ln" style="left:5.4px;top:808.98px;color:#75777d">60</div><div class="cl" style="left:66.5px;top:807.98px">            <span class="p">answerButton3</span>.<span class="o">setTitle</span>(<span class="p">quizArray</span>[<span class="n">4</span>], for: .<span class="o">normal</span>)</div>
<div class="ln" style="left:5.4px;top:830.70px;color:#75777d">61</div><div class="cl" style="left:66.5px;top:829.70px">            <span class="p">answerButton4</span>.<span class="o">setTitle</span>(<span class="p">quizArray</span>[<span class="n">5</span>], for: .<span class="o">normal</span>)</div>
<svg style="left:33.3px;top:366.1px" width="17" height="17" viewBox="0 0 17 17"><circle cx="8.5" cy="8.5" r="7.1" fill="none" stroke="#c9cacd" stroke-width="1.9"/><circle cx="8.5" cy="8.5" r="4.6" fill="#c9cacd"/></svg>
</div>
<div class="abs" style="left:312px;top:945.0px;width:1438px;height:34px;background:#27282e"></div>
<div class="hl" style="left:312px;top:944.6px;width:1438px;height:1.3px;background:#0f1012"></div>
<div class="hl" style="left:312px;top:977.5px;width:1438px;height:1.3px;background:#0f1012"></div>
<div class="abs" style="left:312px;top:978.8px;width:1438px;height:270.2px;background:#24252b"></div>
<div class="hl" style="left:1034.2px;top:978.8px;width:1.4px;height:270.2px;background:#0d0e10"></div>
<svg style="left:323.0px;top:954.8px" width="14.8" height="14.8" viewBox="0 0 14.8 14.8" ><rect x=".7" y=".7" width="13.4" height="13.4" rx="1.6" fill="none" stroke="#8a8b91" stroke-width="1.3"/><path d="M.7 9.4H14.1" stroke="#8a8b91" stroke-width="1.3"/></svg>
<svg style="left:358.0px;top:956.6px" width="17.5" height="11.4" viewBox="0 0 17.5 11.4" ><path d="M1.2 0H11.8L17.2 5.7L11.8 11.4H1.2Q0 11.4 0 10.2V1.2Q0 0 1.2 0Z" fill="#1b66d0"/></svg>
<svg style="left:398.0px;top:954.6px" width="11.4" height="15.4" viewBox="0 0 11.4 15.4" ><rect x=".6" y=".6" width="3.4" height="14.2" rx="1" fill="none" stroke="#8a8b91" stroke-width="1.2"/><rect x="7.2" y=".6" width="3.4" height="14.2" rx="1" fill="none" stroke="#8a8b91" stroke-width="1.2"/></svg>
<svg style="left:433.0px;top:956.5px" width="16" height="13.5" viewBox="0 0 16 13.5" ><path d="M1 8L7.5 1.6L14 8" fill="none" stroke="#4a4b52" stroke-width="1.2" stroke-linejoin="round"/><path d="M10 3L14.8 .8" stroke="#4a4b52" stroke-width="1.1"/><path d="M3 10.2H12M3 12.8H12" stroke="#4a4b52" stroke-width="1.3"/></svg>
<svg style="left:470.5px;top:954.5px" width="12" height="15.5" viewBox="0 0 12 15.5" ><path d="M6 0V9.4M2.4 6L6 9.6L9.6 6" fill="none" stroke="#4a4b52" stroke-width="1.2"/><path d="M.6 12H11.4M.6 14.8H11.4" stroke="#4a4b52" stroke-width="1.3"/></svg>
<svg style="left:506.5px;top:954.5px" width="12" height="15.5" viewBox="0 0 12 15.5" ><path d="M6 9.6V.4M2.4 4L6 .4L9.6 4" fill="none" stroke="#4a4b52" stroke-width="1.2"/><path d="M.6 12H11.4M.6 14.8H11.4" stroke="#4a4b52" stroke-width="1.3"/></svg>
<div class="hl" style="left:530.2px;top:953.0px;width:1.2px;height:17.5px;background:#4f5056"></div>
<svg style="left:542.0px;top:954.6px" width="15.5" height="15.4" viewBox="0 0 15.5 15.4" ><rect x="3.6" y=".7" width="8.3" height="14" rx="1.4" fill="none" stroke="#8a8b91" stroke-width="1.3"/><path d="M3.4 3.2H.7V12.2H3.4M12.1 3.2H14.8V12.2H12.1" fill="none" stroke="#8a8b91" stroke-width="1.2"/></svg>
<svg style="left:578.0px;top:954.6px" width="16" height="15.4" viewBox="0 0 16 15.4" ><circle cx="3" cy="3" r="2.2" fill="none" stroke="#8a8b91" stroke-width="1.2"/><circle cx="3" cy="12.4" r="2.2" fill="none" stroke="#8a8b91" stroke-width="1.2"/><circle cx="13" cy="7.7" r="2.2" fill="none" stroke="#8a8b91" stroke-width="1.2"/><path d="M5 4L11 7M5 11.6L11 8.6" stroke="#8a8b91" stroke-width="1.2"/></svg>
<svg style="left:616.0px;top:954.8px" width="13.6" height="15" viewBox="0 0 13.6 15" ><rect x=".7" y=".7" width="12.2" height="5.6" rx="2.8" fill="none" stroke="#8a8b91" stroke-width="1.3"/><rect x=".7" y="8.7" width="12.2" height="5.6" rx="2.8" fill="none" stroke="#8a8b91" stroke-width="1.3"/><circle cx="3.8" cy="3.5" r="1.5" fill="#8a8b91"/><circle cx="9.8" cy="11.5" r="1.5" fill="#8a8b91"/></svg>
<svg style="left:652.0px;top:955.0px" width="14.5" height="14.5" viewBox="0 0 14.5 14.5" ><path d="M13.8 .7L.9 6.4H7.2V13.2Z" fill="none" stroke="#8a8b91" stroke-width="1.3" stroke-linejoin="round"/></svg>
<div class="hl" style="left:676.7px;top:953.0px;width:1.2px;height:17.5px;background:#4f5056"></div>
<div class="abs" style="left:686px;top:953.2px;width:18px;height:18px;border-radius:4.5px;background:#8a8b8f;background-image:linear-gradient(rgba(0,0,0,.08) 1px,transparent 1px),linear-gradient(90deg,rgba(0,0,0,.08) 1px,transparent 1px);background-size:3px 3px"></div>
<div class="t" style="left:708.7px;top:953.7px;font-size:13.05px;line-height:17px;height:17px;color:#c5c6ca;">SampleQuiz</div>
<div class="t" style="left:321.5px;top:1226.5px;font-size:13.20px;line-height:17px;height:17px;color:#e0e0e3;">Auto</div>
<svg style="left:352.5px;top:1229.5px" width="7" height="11" viewBox="0 0 7 11" ><path d="M1 4L3.5 1.4L6 4M1 7L3.5 9.6L6 7" fill="none" stroke="#d0d0d3" stroke-width="1.3" stroke-linecap="round" stroke-linejoin="round"/></svg>
<div class="hl" style="left:367px;top:1225.5px;width:1.2px;height:19px;background:#4b4c52"></div>
<svg style="left:374.8px;top:1228.5px" width="17" height="12" viewBox="0 0 17 12" ><path d="M.6 6Q4 .8 8.5 .8Q13 .8 16.4 6Q13 11.2 8.5 11.2Q4 11.2 .6 6Z" fill="none" stroke="#45464d" stroke-width="1.2"/><circle cx="8.5" cy="6" r="2.6" fill="none" stroke="#45464d" stroke-width="1.2"/></svg>
<svg style="left:400.0px;top:1227.5px" width="14.5" height="14.5" viewBox="0 0 14.5 14.5" ><circle cx="7.25" cy="7.25" r="6.5" fill="none" stroke="#45464d" stroke-width="1.2"/><path d="M7.25 6.4V10.8" stroke="#45464d" stroke-width="1.4"/><circle cx="7.25" cy="4" r=".9" fill="#45464d"/></svg>
<div class="abs" style="left:831.7px;top:1222.7px;width:196px;height:24.6px;border-radius:6px;background:#1b1c1f;border:1px solid #303136"></div>
<svg style="left:836.6px;top:1227.6px" width="14.8" height="14.8" viewBox="0 0 14.8 14.8" ><circle cx="7.4" cy="7.4" r="6.6" fill="none" stroke="#b4b5b8" stroke-width="1.4"/><path d="M3.6 5.4H11.2M4.8 7.8H10M6.2 10.2H8.6" stroke="#b4b5b8" stroke-width="1.2"/></svg>
<div class="t" style="left:856.0px;top:1226.2px;font-size:13.60px;line-height:18px;height:18px;color:#5c5d63;">Filter</div>
<div class="t" style="left:1045.0px;top:1226.7px;font-size:13.10px;line-height:17px;height:17px;color:#dcdcdf;">All Output</div>
<svg style="left:1108.5px;top:1229.5px" width="7" height="11" viewBox="0 0 7 11" ><path d="M1 4L3.5 1.4L6 4M1 7L3.5 9.6L6 7" fill="none" stroke="#c6c6c9" stroke-width="1.3" stroke-linecap="round" stroke-linejoin="round"/></svg>
<div class="abs" style="left:1461px;top:1222.7px;width:195px;height:24.6px;border-radius:6px;background:#1b1c1f;border:1px solid #303136"></div>
<svg style="left:1466.5px;top:1227.6px" width="14.8" height="14.8" viewBox="0 0 14.8 14.8" ><circle cx="7.4" cy="7.4" r="6.6" fill="none" stroke="#b4b5b8" stroke-width="1.4"/><path d="M3.6 5.4H11.2M4.8 7.8H10M6.2 10.2H8.6" stroke="#b4b5b8" stroke-width="1.2"/></svg>
<div class="t" style="left:1486.0px;top:1226.2px;font-size:13.60px;line-height:18px;height:18px;color:#5c5d63;">Filter</div>
<svg style="left:1676.5px;top:1227.5px" width="12" height="15" viewBox="0 0 12 15" ><path d="M.4 2.8H11.6M4 2.6V.8H8V2.6" fill="none" stroke="#8a8b91" stroke-width="1.2"/><path d="M1.6 3.2L2.3 14.2H9.7L10.4 3.2" fill="none" stroke="#8a8b91" stroke-width="1.2"/><path d="M4.4 5.4V12M6 5.4V12M7.6 5.4V12" stroke="#8a8b91" stroke-width=".9"/></svg>
<div class="hl" style="left:1698px;top:1225.5px;width:1.2px;height:19px;background:#3d3e44"></div>
<svg style="left:1706.0px;top:1227.5px" width="14" height="15" viewBox="0 0 14 15" ><rect x=".7" y=".7" width="12.6" height="13.6" rx="1.6" fill="none" stroke="#244a86" stroke-width="1.3"/><path d="M4.2 1V14" stroke="#244a86" stroke-width="1.2"/></svg>
<svg style="left:1727.0px;top:1227.5px" width="14" height="15" viewBox="0 0 14 15" ><rect x=".7" y=".7" width="12.6" height="13.6" rx="1.6" fill="none" stroke="#244a86" stroke-width="1.3"/><path d="M9.8 1V14" stroke="#244a86" stroke-width="1.2"/></svg>
<div class="con" style="top:980.1px"><span class="j">正解</span></div>
<div class="con" style="top:1003.0px"><span class="j">スコア：</span><span style="font-size:14.6px;line-height:0">1</span></div>
<div class="con" style="top:1025.9px"><span class="j">不正解</span></div>
<div class="con" style="top:1048.8px"><span class="j">スコア：</span><span style="font-size:14.6px;line-height:0">1</span></div>
<div class="con" style="top:1071.7px"><span class="j">正解</span></div>
<div class="con" style="top:1094.6px"><span class="j">スコア：</span><span style="font-size:14.6px;line-height:0">2</span></div>
<div class="con" style="top:1117.5px"><span class="j">不正解</span></div>
<div class="con" style="top:1140.4px"><span class="j">スコア：</span><span style="font-size:14.6px;line-height:0">2</span></div>
<div class="con" style="top:1163.3px"><span class="j">正解</span></div>
<div class="con" style="top:1186.2px"><span class="j">スコア：</span><span style="font-size:14.6px;line-height:0">3</span></div>
<div class="abs" style="left:0;top:0;right:0;bottom:0;border-radius:11px 11px 10px 10px;border:1px solid rgba(255,255,255,.2);border-bottom-color:rgba(255,255,255,.08)"></div>
</div>
<div class="abs" style="left:1018px;top:984.8px;width:117.3px;height:259.2px;border:8.3px solid #fc3a6d;border-radius:4px"></div>
<svg style="left:0;top:0" width="2048" height="1280" viewBox="0 0 2048 1280"><path d="M853.5 1098.6C890 1097.800 940 1094.500 975.500 1090.200L971.200 1076.200L1019.500 1102.300L971.400 1124.800L975.600 1111.400C940 1108.200 890 1104.800 853.500 1103.400A2.400 2.400 0 0 1 853.500 1098.600Z" fill="#fc3a6d"/></svg>
<div class="abs" style="left:1416.0px;top:166.0px;width:535.0px;height:1088.0px;border-radius:78px;box-shadow:0 16px 46px 9px rgba(8,9,12,.44)"></div>
<div class="abs" style="left:1405.3px;top:94.3px;width:557.0px;height:58.6px;border-radius:10.5px;background:#25272e;box-shadow:0 0 0 1px rgba(0,0,0,.38),0 10px 30px rgba(0,0,0,.5),inset 0 1px 0 rgba(255,255,255,.18)"></div>
<div class="abs" style="left:1426.9px;top:116.1px;width:14.2px;height:14.2px;border-radius:50%;background:#fe5f57"></div>
<div class="abs" style="left:1449.8px;top:116.1px;width:14.2px;height:14.2px;border-radius:50%;background:#febc2e"></div>
<div class="abs" style="left:1472.6px;top:116.1px;width:14.2px;height:14.2px;border-radius:50%;background:#28c840"></div>
<div class="t" style="left:1508.4px;top:106.5px;font-size:14.80px;line-height:19px;height:19px;color:#ececee;font-weight:bold">iPhone 11</div>
<div class="t" style="left:1508.4px;top:124.5px;font-size:12.90px;line-height:17px;height:17px;color:#8b8c92;">iOS 14.3</div>
<svg style="left:1823.0px;top:113.4px" width="24.5" height="20" viewBox="0 0 24.5 20"><path d="M3.6 13.6H2.4Q.8 13.6 .8 12V2.4Q.8 .8 2.4 .8H16Q17.6 .8 17.6 2.4V3.4" fill="none" stroke="#a9aaae" stroke-width="1.6"/><rect x="5.6" y="5.6" width="18" height="13.4" rx="2.2" fill="none" stroke="#a9aaae" stroke-width="1.6"/><path d="M10.4 5.6L11.6 3.8H17.6L18.8 5.6" fill="none" stroke="#a9aaae" stroke-width="1.4"/><circle cx="14.4" cy="12.4" r="3.3" fill="none" stroke="#a9aaae" stroke-width="1.6"/><circle cx="20.4" cy="8.6" r=".8" fill="#a9aaae"/></svg>
<svg style="left:1868.5px;top:113.6px" width="22" height="19.4" viewBox="0 0 22 19.4"><path d="M1 9.8L11 1.2L21 9.8" fill="none" stroke="#a9aaae" stroke-width="1.7" stroke-linecap="round" stroke-linejoin="round"/><path d="M3.8 8.4V18.4H18.2V8.4" fill="none" stroke="#a9aaae" stroke-width="1.7" stroke-linejoin="round"/><rect x="9" y="11.6" width="4" height="6.8" fill="#a9aaae"/><path d="M16.2 2V5.4" stroke="#a9aaae" stroke-width="1.7"/></svg>
<svg style="left:1910.5px;top:111.8px" width="18.6" height="21" viewBox="0 0 18.6 21"><rect x="4.6" y="7.4" width="13" height="12.6" rx="1.6" fill="none" stroke="#a9aaae" stroke-width="1.7"/><path d="M1.2 8.4Q1.2 3 6.6 3" fill="none" stroke="#a9aaae" stroke-width="1.6"/><path d="M6 0L9.6 3L6 6Z" fill="#a9aaae"/></svg>
<div class="abs" style="left:1410.2px;top:301.9px;width:7.0px;height:37.6px;background:#2b2b2d;border:1px solid #3d3d40;border-radius:2px 0 0 2px"></div>
<div class="abs" style="left:1410.2px;top:374.4px;width:7.0px;height:68.4px;background:#2b2b2d;border:1px solid #3d3d40;border-radius:2px 0 0 2px"></div>
<div class="abs" style="left:1410.2px;top:447.2px;width:7.0px;height:75.0px;background:#2b2b2d;border:1px solid #3d3d40;border-radius:2px 0 0 2px"></div>
<div class="abs" style="left:1949.5px;top:373.6px;width:7.0px;height:69.3px;background:#2b2b2d;border:1px solid #3d3d40;border-radius:0 2px 2px 0"></div>
<div class="abs" style="left:1416.0px;top:165.0px;width:535.2px;height:1089.6px;border-radius:79px;background:#1b1b1c;border:1.2px solid #47484b"></div>
<div class="abs" style="left:1446.0px;top:195.0px;width:475.0px;height:1028.5px;border-radius:52px;background:#fff"></div>
<svg style="left:1540.0px;top:194.0px" width="288" height="40" viewBox="0 0 288 40"><path d="M0 0H288V1Q277 1 276.3 9V13Q276 38.7 249 38.7H39Q12 38.7 11.7 13V9Q11 1 0 1Z" fill="#1b1b1c"/></svg>
<div class="t" style="left:1485.3px;top:212.2px;font-size:18.50px;line-height:24px;height:24px;color:#000;font-weight:bold;letter-spacing:.85px">9:08</div>
<div class="abs" style="left:1820.7px;top:226.6px;width:3.8px;height:3.8px;background:#c9c9cb;border-radius:.8px"></div>
<div class="abs" style="left:1826.5px;top:226.6px;width:3.8px;height:3.8px;background:#c9c9cb;border-radius:.8px"></div>
<div class="abs" style="left:1832.3px;top:226.6px;width:3.8px;height:3.8px;background:#c9c9cb;border-radius:.8px"></div>
<div class="abs" style="left:1838.1px;top:226.6px;width:3.8px;height:3.8px;background:#c9c9cb;border-radius:.8px"></div>
<svg style="left:1847.4px;top:217.0px" width="18" height="13.6" viewBox="0 0 18 13.6"><path d="M9 13.4L6.5 10.7Q9 8.7 11.5 10.7Z" fill="#000"/><path d="M3.9 8Q9 3.6 14.1 8" fill="none" stroke="#000" stroke-width="2.1" stroke-linecap="butt"/><path d="M.9 4.9Q9 -2.3 17.1 4.9" fill="none" stroke="#000" stroke-width="2.1"/></svg>
<svg style="left:1871.3px;top:216.7px" width="31" height="14" viewBox="0 0 31 14"><rect x=".6" y=".6" width="26.6" height="12.8" rx="3.6" fill="none" stroke="#a8a8aa" stroke-width="1.2"/><rect x="2.4" y="2.4" width="23" height="9.2" rx="2" fill="#000"/><path d="M28.6 4.8Q30.3 5.6 30.3 7Q30.3 8.4 28.6 9.2Z" fill="#a8a8aa"/></svg>
<div class="t" style="left:1446px;width:475px;text-align:center;top:360.5px;font-size:32.8px;line-height:40px;height:40px;color:#000">Label</div>
<div class="t" style="left:1446px;width:475px;text-align:center;top:689.6px;font-size:32.3px;line-height:40px;height:40px;color:#227de6;font-weight:300;-webkit-text-stroke:.25px;font-family:'Liberation Sans','Noto Sans CJK JP',sans-serif">トップに戻る</div>
<div class="abs" style="left:1598.8px;top:1208.0px;width:170.0px;height:6.2px;border-radius:3.1px;background:#000"></div>
</div>
</body></html>
